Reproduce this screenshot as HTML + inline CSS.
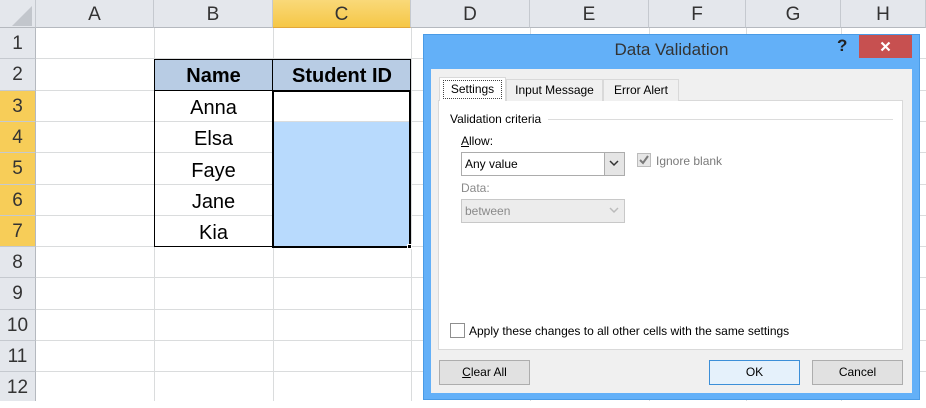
<!DOCTYPE html>
<html><head><meta charset="utf-8"><style>
*{box-sizing:border-box;margin:0;padding:0}
body{width:926px;height:408px;background:#fff;position:relative;overflow:hidden;font-family:"Liberation Sans",sans-serif}
.a{position:absolute}
.ch{position:absolute;top:0;height:28px;background:#e4e7ec;border-right:1px solid #c5c9cf;border-bottom:1px solid #b5b9bf;font-size:19px;color:#333;text-align:center;line-height:29px}
.rh{position:absolute;left:0;width:36px;background:#e4e7ec;border-bottom:1px solid #c5c9cf;border-right:1px solid #b5b9bf;font-size:19px;color:#333;text-align:center}
.vl{position:absolute;top:28px;height:373px;width:1px;background:#dadcdd}
.hl{position:absolute;left:36px;width:890px;height:1px;background:#dadcdd}
.cell{position:absolute;font-family:"Liberation Sans",sans-serif;font-size:20px;text-align:center;color:#000}
.dlg{font-family:"Liberation Sans",sans-serif;font-size:12px;color:#000}
.btn{position:absolute;height:25px;background:#e1e1e1;border:1px solid #adadad;text-align:center;line-height:23px;font-size:12px}
</style></head><body>
<div class="ch" style="left:0;width:36px;background:#e4e7ec"></div>
<svg class="a" style="left:10px;top:6px" width="22" height="20"><polygon points="22,0 22,20 2,20" fill="#c2c6cc"/></svg>
<div class="ch" style="left:36px;width:118px">A</div>
<div class="ch" style="left:154px;width:119px">B</div>
<div class="ch" style="left:273px;width:138px;background:linear-gradient(#f9d979,#f6c746);border-bottom:1px solid #e2a73a">C</div>
<div class="ch" style="left:411px;width:119px">D</div>
<div class="ch" style="left:530px;width:119px">E</div>
<div class="ch" style="left:649px;width:97px">F</div>
<div class="ch" style="left:746px;width:95px">G</div>
<div class="ch" style="left:841px;width:85px">H</div>
<div class="rh" style="top:28px;height:31px;line-height:31px">1</div>
<div class="rh" style="top:59px;height:32px;line-height:32px">2</div>
<div class="rh" style="top:91px;height:31px;line-height:31px;background:#f7cd58">3</div>
<div class="rh" style="top:122px;height:31px;line-height:31px;background:#f7cd58">4</div>
<div class="rh" style="top:153px;height:32px;line-height:32px;background:#f7cd58">5</div>
<div class="rh" style="top:185px;height:31px;line-height:31px;background:#f7cd58">6</div>
<div class="rh" style="top:216px;height:31px;line-height:31px;background:#f7cd58">7</div>
<div class="rh" style="top:247px;height:31px;line-height:31px">8</div>
<div class="rh" style="top:278px;height:32px;line-height:32px">9</div>
<div class="rh" style="top:310px;height:31px;line-height:31px">10</div>
<div class="rh" style="top:341px;height:31px;line-height:31px">11</div>
<div class="rh" style="top:372px;height:29px;line-height:31px;border-bottom:none">12</div>
<div class="vl" style="left:154px"></div><div class="vl" style="left:273px"></div><div class="vl" style="left:411px"></div>
<div class="vl" style="left:530px"></div><div class="vl" style="left:649px"></div><div class="vl" style="left:746px"></div><div class="vl" style="left:841px"></div>
<div class="hl" style="top:58px"></div><div class="hl" style="top:90px"></div><div class="hl" style="top:121px"></div><div class="hl" style="top:152px"></div><div class="hl" style="top:184px"></div><div class="hl" style="top:215px"></div><div class="hl" style="top:246px"></div><div class="hl" style="top:277px"></div><div class="hl" style="top:309px"></div><div class="hl" style="top:340px"></div><div class="hl" style="top:371px"></div>
<div class="a" style="left:154px;top:59px;width:257px;height:32px;background:#b8cce4"></div>
<div class="a" style="left:274px;top:122px;width:136px;height:125px;background:#b8dafd"></div>
<div class="a" style="left:154px;top:59px;width:257px;height:188px;border:1px solid #000"></div>
<div class="a" style="left:154px;top:90px;width:257px;height:1px;background:#000"></div>
<div class="a" style="left:272px;top:59px;width:1px;height:188px;background:#000"></div>
<div class="a" style="left:272px;top:90px;width:139px;height:158px;border:2px solid #000"></div>
<div class="a" style="left:407px;top:244px;width:5px;height:5px;background:#000;border:1px solid #fff"></div>
<div class="cell" style="left:154px;top:65px;width:119px;font-weight:bold">Name</div>
<div class="cell" style="left:273px;top:65px;width:138px;font-weight:bold">Student ID</div>
<div class="cell" style="left:154px;top:97px;width:119px">Anna</div>
<div class="cell" style="left:154px;top:128px;width:119px">Elsa</div>
<div class="cell" style="left:154px;top:160px;width:119px">Faye</div>
<div class="cell" style="left:154px;top:191px;width:119px">Jane</div>
<div class="cell" style="left:154px;top:222px;width:119px">Kia</div>
<div class="a dlg" style="left:423px;top:34px;width:497px;height:366px;background:#63b0f8;border:1px solid #4a9be6"></div>
<div class="a" style="left:423px;top:40px;width:497px;text-align:center;font-size:17px;color:#333">Data Validation</div>
<div class="a" style="left:837px;top:36px;font-size:17px;font-weight:bold;color:#222">?</div>
<div class="a" style="left:859px;top:35px;width:53px;height:23px;background:#c75050"></div>
<svg class="a" style="left:880px;top:41px" width="11" height="11"><path d="M1.5 1.5L9.5 9.5M9.5 1.5L1.5 9.5" stroke="#fff" stroke-width="2.2"/></svg>
<div class="a dlg" style="left:431px;top:69px;width:481px;height:324px;background:#f0f0f0"></div>
<div class="a dlg" style="left:438px;top:100px;width:465px;height:250px;background:#fff;border:1px solid #d9d9d9"></div>
<div class="a dlg" style="left:439px;top:77px;width:67px;height:24px;background:#fff;border:1px solid #d9d9d9;border-bottom:none"></div>
<div class="a dlg" style="left:443px;top:80px;width:59px;height:19px;border:1px dotted #444;text-align:center;line-height:17px">Settings</div>
<div class="a dlg" style="left:506px;top:79px;width:97px;height:22px;background:#f0f0f0;border:1px solid #d9d9d9;border-bottom:none;text-align:center;line-height:21px">Input Message</div>
<div class="a dlg" style="left:603px;top:79px;width:76px;height:22px;background:#f0f0f0;border:1px solid #d9d9d9;border-bottom:none;text-align:center;line-height:21px">Error Alert</div>
<div class="a dlg" style="left:450px;top:112px">Validation criteria</div>
<div class="a" style="left:548px;top:119px;width:345px;height:1px;background:#dcdcdc"></div>
<div class="a dlg" style="left:461px;top:134px"><u>A</u>llow:</div>
<div class="a dlg" style="left:461px;top:152px;width:164px;height:24px;background:#fff;border:1px solid #acacac;line-height:22px;padding-left:3px">Any value</div>
<div class="a" style="left:604px;top:153px;width:20px;height:22px;background:#e5e5e5;border-left:1px solid #acacac"></div>
<svg class="a" style="left:609px;top:160px" width="10" height="7"><path d="M1 1L5 5L9 1" stroke="#333" stroke-width="1.5" fill="none"/></svg>
<div class="a" style="left:637px;top:153px;width:14px;height:14px;background:#e6e6e6;border:1px solid #bcbcbc"></div>
<svg class="a" style="left:639px;top:155px" width="10" height="10"><path d="M1 5L4 8L9 1" stroke="#7a7a7a" stroke-width="2" fill="none"/></svg>
<div class="a dlg" style="left:656px;top:154px;color:#7a7a7a">Ignore blank</div>
<div class="a dlg" style="left:461px;top:181px;color:#8a8a8a">Data:</div>
<div class="a dlg" style="left:461px;top:199px;width:164px;height:24px;background:#ececec;border:1px solid #c8c8c8;line-height:22px;padding-left:3px;color:#8a8a8a">between</div>
<svg class="a" style="left:609px;top:207px" width="10" height="7"><path d="M1 1L5 5L9 1" stroke="#bbb" stroke-width="1.5" fill="none"/></svg>
<div class="a" style="left:450px;top:323px;width:15px;height:15px;background:#fff;border:1px solid #8f8f8f"></div>
<div class="a dlg" style="left:469px;top:324px">Apply these changes to all other cells with the same settings</div>
<div class="btn dlg" style="left:439px;top:360px;width:91px"><u>C</u>lear All</div>
<div class="btn dlg" style="left:709px;top:360px;width:91px;border:1px solid #3c8fd8;background:#e5f1fb">OK</div>
<div class="btn dlg" style="left:812px;top:360px;width:91px">Cancel</div>
</body></html>
